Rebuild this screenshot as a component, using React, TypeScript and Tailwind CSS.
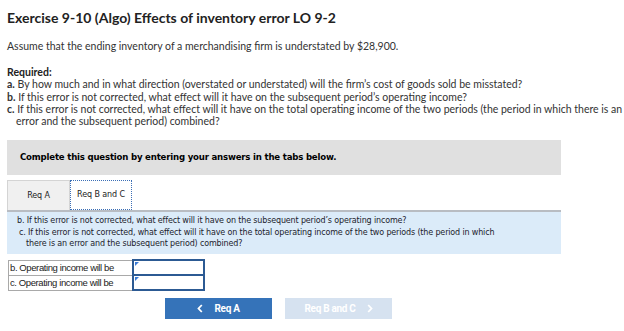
import React from "react";

const body = { fontFamily: "Lato, 'Open Sans', sans-serif" };
const verd = { fontFamily: "'DejaVu Sans', Verdana, sans-serif" };
const arial = { fontFamily: "'Liberation Sans', Arial, sans-serif" };

function Chevron({ dir }: { dir: "l" | "r" }) {
  return (
    <svg width="6" height="9" viewBox="0 0 6 9" className="shrink-0">
      <polyline
        points={dir === "l" ? "4.8,1 1.5,4.5 4.8,8" : "1.2,1 4.5,4.5 1.2,8"}
        fill="none"
        stroke="white"
        strokeWidth="1.8"
      />
    </svg>
  );
}

export default function App() {
  return (
    <div className="w-[624px] h-[331px] bg-white overflow-hidden text-[#333]" style={body}>
      <div className="pl-[7px] pt-[9px]">
        <h1 className="text-[14px] font-bold leading-[18px] text-[#222]">
          Exercise 9-10 (Algo) Effects of inventory error LO 9-2
        </h1>
        <div className="w-[616px]">
          <p className="mt-[13px] text-[10.5px] leading-[13px]">
            Assume that the ending inventory of a merchandising firm is understated by $28,900.
          </p>
          <div className="mt-[13px] text-[10.5px] leading-[12.25px]">
            <div className="font-bold text-[#222]">Required:</div>
            <div>
              <span className="font-bold">a.</span> By how much and in what direction (overstated or understated) will the firm’s cost of goods sold be misstated?
            </div>
            <div>
              <span className="font-bold">b.</span> If this error is not corrected, what effect will it have on the subsequent period’s operating income?
            </div>
            <div className="pl-[9px] -indent-[9px]">
              <span className="font-bold">c.</span> If this error is not corrected, what effect will it have on the total operating income of the two periods (the period in which there is an error and the subsequent period) combined?
            </div>
          </div>
        </div>

        <div className="w-[554px]">
          <div className="mt-[13px] h-[35px] bg-[#e0e0e0] flex items-center pl-[13px]">
            <span className="font-bold text-[8.6px] tracking-[-0.2px] text-black" style={verd}>
              Complete this question by entering your answers in the tabs below.
            </span>
          </div>

          <div className="mt-[5px] flex items-end h-[30px]">
            <div className="h-[30px] w-[63px] bg-[#f0f0f0] border border-[#d4d4d4] border-b-0 flex items-center justify-center text-[8px] tracking-[-0.1px] text-[#222]" style={verd}>
              Req A
            </div>
            <div className="h-[30px] w-[62px] bg-white border border-dotted border-[#3b6fb6] flex items-center justify-center text-[8px] tracking-[-0.1px] text-[#222]" style={verd}>
              Req B and C
            </div>
          </div>
          <div className="h-[44px] bg-[#dbebf9] border-t-2 border-[#b8bcc2] pl-[10px] pr-[50px] pt-[3px] text-[8px] tracking-[-0.15px] leading-[11.5px] text-[#1c1c2c]" style={verd}>
            <div>b. If this error is not corrected, what effect will it have on the subsequent period’s operating income?</div>
            <div className="pl-[9px] -indent-[7px]">
              c. If this error is not corrected, what effect will it have on the total operating income of the two periods (the period in which there is an error and the subsequent period) combined?
            </div>
          </div>
        </div>

        <table className="mt-[5px] border-collapse ml-px" style={arial}>
          <tbody>
            {["b. Operating income will be", "c. Operating income will be"].map((t) => (
              <tr key={t} className="h-[15px]">
                <td className="border border-[#a9a9a9] w-[124px] text-[9.5px] tracking-[-0.4px] leading-[13px] px-[1px] text-[#222]">{t}</td>
                <td className="border-2 border-[#2c5a93] w-[71px] p-0 relative">
                  <span className="absolute left-px top-px w-0 h-0 border-t-[4px] border-r-[4px] border-t-[#3a7bd5] border-r-transparent" />
                </td>
              </tr>
            ))}
          </tbody>
        </table>

        <div className="mt-[7px] flex gap-[13px] pl-[158px]" style={{ fontFamily: "Roboto, sans-serif" }}>
          <button className="h-[21px] w-[107px] bg-[#3573b9] text-white text-[10px] font-bold flex items-center justify-center gap-[11px] tracking-[-0.3px]">
            <Chevron dir="l" /> Req A
          </button>
          <button className="h-[21px] w-[107px] bg-[#d6e2f0] text-white text-[10px] font-bold flex items-center justify-center gap-[11px] tracking-[-0.3px]">
            Req B and C <Chevron dir="r" />
          </button>
        </div>
      </div>
    </div>
  );
}
